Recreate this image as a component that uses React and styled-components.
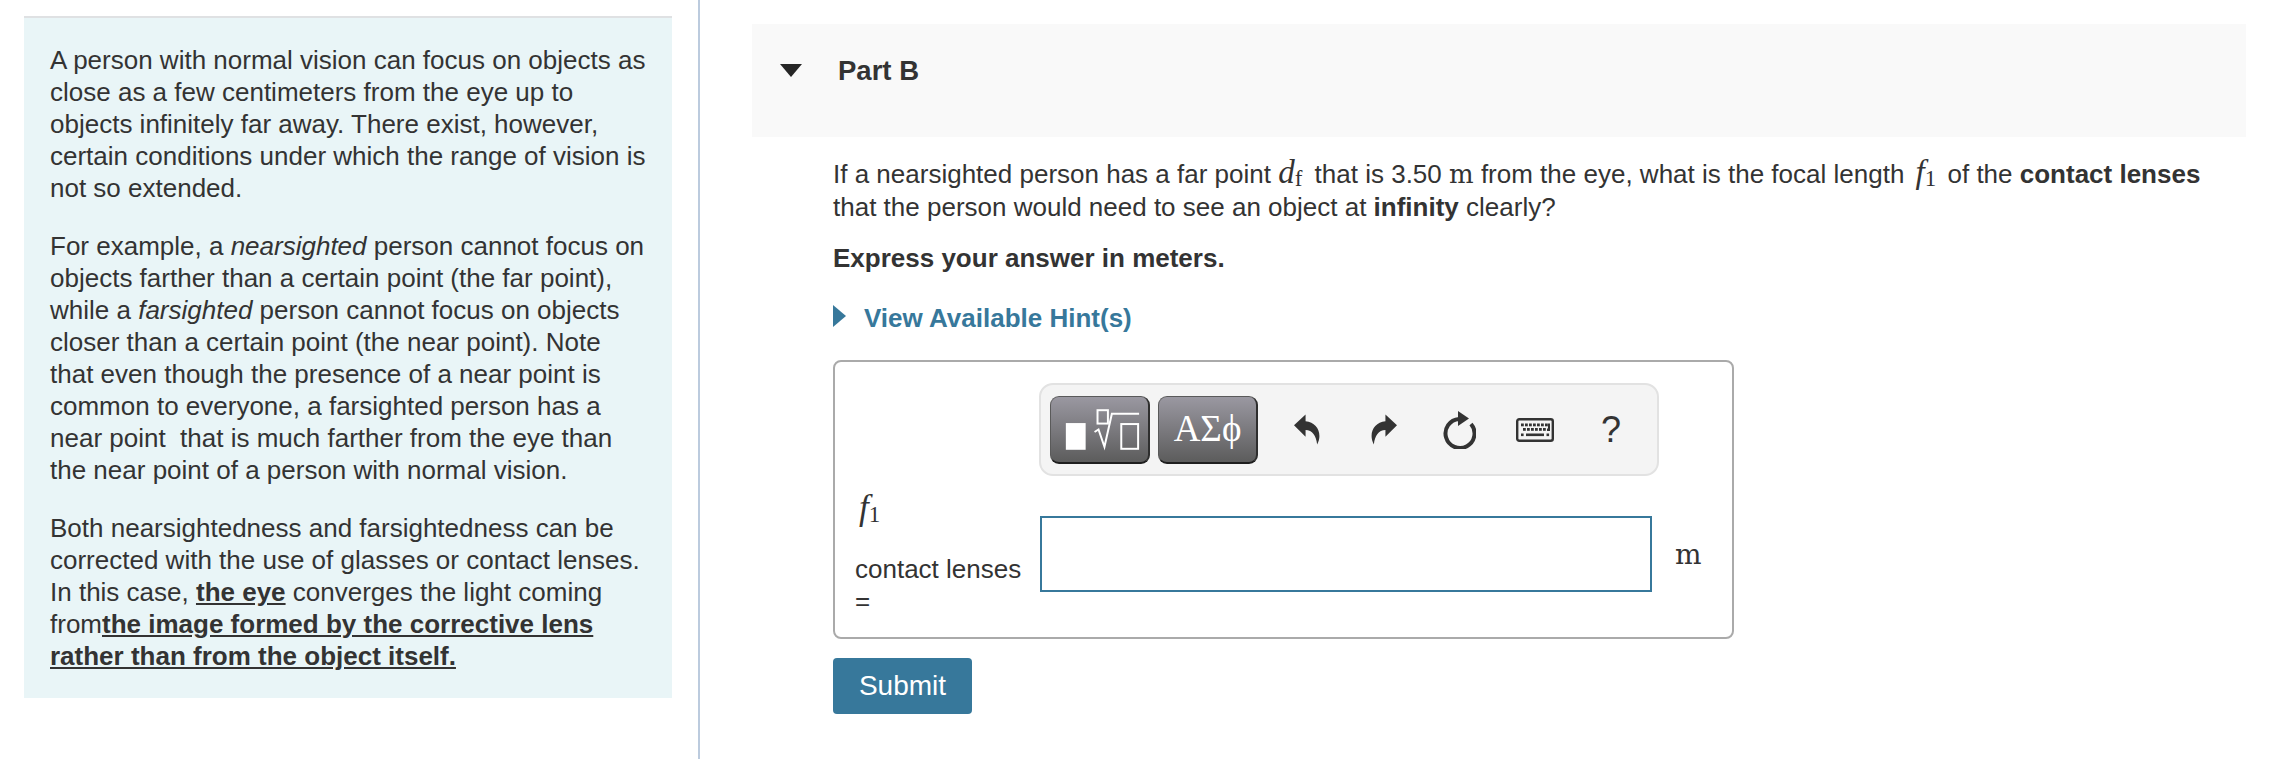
import React from 'react';
import styled, { createGlobalStyle } from 'styled-components';

const GlobalStyle = createGlobalStyle`
    html, body {
        margin: 0;
        padding: 0;
        background: #fff;
        overflow: hidden;
    }
    body {
        font-family: "Liberation Sans", Arial, sans-serif;
        font-size: 26px;
        line-height: 32px;
        color: #333;
    }
`;

const Page = styled.div`
    display: flex;
    width: 2284px;
    height: 759px;
`;

const LeftColumn = styled.aside`
    flex: none;
    width: 648px;
    height: 100%;
    box-sizing: content-box;
    padding: 16px 26px 0 24px;
    border-right: 2px solid #bccbde;
`;

const IntroPanel = styled.div`
    background: #e9f5f7;
    border-top: 2px solid #dfe1e3;
    padding: 26px 24px 26px 26px;
`;

const Paragraph = styled.p`
    margin: 0 0 26px;
    &:last-child {
        margin-bottom: 0;
    }
`;

const Strong = styled.strong`
    text-decoration: ${p => (p.$underline ? 'underline' : 'none')};
`;

const RightColumn = styled.main`
    flex: 1;
    padding: 24px 38px 0 52px;
    min-width: 0;
`;

const PartHeader = styled.header`
    display: flex;
    align-items: flex-start;
    height: 113px;
    box-sizing: border-box;
    padding: 31px 0 0 28px;
    background: #f9f9f9;
    font-weight: bold;
    font-size: 27.5px;
`;

const Caret = styled.span`
    width: 0;
    height: 0;
    margin: 9px 36px 0 0;
    border-left: 11px solid transparent;
    border-right: 11px solid transparent;
    border-top: 13px solid #262626;
`;

const PartBody = styled.section`
    padding: 21px 0 0 81px;
`;

const Question = styled.div`
    line-height: 33px;
`;

const MathVar = styled.span`
    font-family: "Liberation Serif", serif;
    font-style: italic;
    font-size: 33px;
    line-height: 0;
    margin: ${p => (p.$tight ? '0 5px 0 0' : '0 4px')};
`;

const Sub = styled.sub`
    font-family: "Liberation Serif", serif;
    font-style: normal;
    font-size: 23px;
    line-height: 0;
    vertical-align: -3px;
`;

const Unit = styled.span`
    font-family: "DejaVu Serif", serif;
    font-size: 26px;
    line-height: 0;
`;

const Instruction = styled.div`
    margin-top: 18px;
    font-weight: bold;
`;

const HintToggle = styled.div`
    display: flex;
    align-items: center;
    gap: 18px;
    margin-top: 28px;
    font-weight: bold;
    color: #37789b;
`;

const HintCaret = styled.span`
    width: 0;
    height: 0;
    margin-top: -4px;
    border-top: 11px solid transparent;
    border-bottom: 11px solid transparent;
    border-left: 13px solid #37789b;
`;

const AnswerBox = styled.div`
    width: 901px;
    height: 279px;
    box-sizing: border-box;
    margin-top: 26px;
    padding: 21px 0 0 20px;
    border: 2px solid #aaa;
    border-radius: 8px;
`;

const Toolbar = styled.div`
    display: flex;
    align-items: center;
    width: 620px;
    height: 93px;
    box-sizing: border-box;
    margin-left: 184px;
    padding-left: 9px;
    background: #f4f4f4;
    border: 2px solid #e2e2e2;
    border-radius: 14px;
`;

const PaletteButton = styled.div`
    display: flex;
    align-items: center;
    justify-content: center;
    width: 100px;
    height: 68px;
    box-sizing: border-box;
    margin-right: 8px;
    background: linear-gradient(#9a98a1, #5c5c5c);
    border: 1px solid #5a5a5a;
    border-bottom: 2px solid #1e1e1e;
    border-right: 2px solid #2e2e2e;
    border-radius: 9px;
    color: #fff;
    font-family: "Liberation Serif", serif;
    font-size: 37px;
`;

const ToolGroup = styled.div`
    display: flex;
    align-items: center;
    margin-left: 3px;
`;

const ToolIcon = styled.div`
    display: flex;
    align-items: center;
    justify-content: center;
    width: 76px;
    color: #333;
    font-size: 36px;
`;

const AnswerRow = styled.div`
    display: flex;
    margin-top: 15px;
`;

const AnswerLabel = styled.div`
    width: 185px;
    flex: none;
`;

const LabelVar = styled.div`
    font-family: "Liberation Serif", serif;
    font-style: italic;
    font-size: 35px;
    height: 62px;
    line-height: 34px;
    padding-left: 4px;
`;

const AnswerInput = styled.div`
    width: 612px;
    height: 76px;
    box-sizing: border-box;
    margin-top: 25px;
    border: 2px solid #37789b;
    background: #fff;
`;

const AnswerUnit = styled(Unit)`
    margin: 44px 0 0 23px;
    line-height: 40px;
    font-size: 28px;
`;

const Submit = styled.button`
    display: block;
    width: 139px;
    height: 56px;
    margin-top: 19px;
    padding: 0;
    border: 0;
    border-radius: 4px;
    background: #37789b;
    color: #fff;
    font-family: inherit;
    font-size: 28px;
`;

function TemplatesIcon() {
    return (
        <svg width="98" height="65" viewBox="1 1 98 65" fill="none" stroke="#fff">
            <rect x="16" y="27" width="20" height="27" fill="#fff" stroke="none" />
            <rect x="48" y="14" width="10.5" height="13.5" strokeWidth="2" />
            <rect x="72" y="28" width="17" height="25" strokeWidth="2" />
            <path d="M45 36 L49 33.5 L55 51 L62.5 17.5 H90" strokeWidth="2" />
        </svg>
    );
}

function UndoIcon({ flip }) {
    return (
        <svg width="27" height="32" viewBox="0 0 28 32" fill="#333"
            transform={flip ? 'scale(-1 1)' : undefined}>
            <path d="M0 11 L12 0 V7 C24 8 30 20 24 31 C23 22 19 16 12 16 V23 Z" />
        </svg>
    );
}

function ResetIcon() {
    return (
        <svg width="34" height="38" viewBox="0 0 34 38" fill="none" stroke="#333">
            <path d="M29 13 A14.5 14.5 0 1 1 17 8" strokeWidth="4" />
            <path d="M16 0 L27 7.5 L16 15 Z" fill="#333" stroke="none" />
        </svg>
    );
}

function KeyboardIcon() {
    const keys = [];
    for (let i = 0; i < 7; i++) keys.push(<rect key={`a${i}`} x={5 + i * 4} y="5.5" width="2.8" height="2.8" />);
    for (let i = 0; i < 6; i++) keys.push(<rect key={`b${i}`} x={7 + i * 4} y="10" width="2.8" height="2.8" />);
    return (
        <svg width="38" height="24" viewBox="0 0 38 24" fill="#333">
            <rect x="1.2" y="1.2" width="35.6" height="21.6" rx="2" fill="none" stroke="#333" strokeWidth="2.4" />
            {keys}
            <path d="M32 5.5 H34 V13 H31 V10.5 H32 Z" />
            <rect x="5" y="15.5" width="2.6" height="2.6" />
            <rect x="10" y="15.5" width="18" height="2.6" />
            <rect x="30.5" y="15.5" width="2.6" height="2.6" />
        </svg>
    );
}

export default function App() {
    return (
        <Page>
            <GlobalStyle />
            <LeftColumn>
                <IntroPanel>
                    <Paragraph>
                        A person with normal vision can focus on objects as close as a few centimeters from the eye up to objects infinitely far away. There exist, however, certain conditions under which the range of vision is not so extended.
                    </Paragraph>
                    <Paragraph>
                        For example, a <em>nearsighted</em> person cannot focus on objects farther than a certain point (the far point), while a <em>farsighted</em> person cannot focus on objects closer than a certain point (the near point). Note that even though the presence of a near point is common to everyone, a farsighted person has a near point&nbsp; that is much farther from the eye than the near point of a person with normal vision.
                    </Paragraph>
                    <Paragraph>
                        Both nearsightedness and farsightedness can be corrected with the use of glasses or contact lenses. In this case, <Strong $underline>the eye</Strong> converges the light coming from<Strong $underline>the image formed by the corrective lens rather than from the object itself.</Strong>
                    </Paragraph>
                </IntroPanel>
            </LeftColumn>
            <RightColumn>
                <PartHeader>
                    <Caret />
                    Part B
                </PartHeader>
                <PartBody>
                    <Question>
                        If a nearsighted person has a far point <MathVar $tight>d<Sub>f</Sub></MathVar> that is 3.50 <Unit>m</Unit> from the eye, what is the focal length <MathVar>f<Sub>1</Sub></MathVar> of the <strong>contact lenses</strong><br />
                        that the person would need to see an object at <strong>infinity</strong> clearly?
                    </Question>
                    <Instruction>Express your answer in meters.</Instruction>
                    <HintToggle>
                        <HintCaret />
                        View Available Hint(s)
                    </HintToggle>
                    <AnswerBox>
                        <Toolbar>
                            <PaletteButton><TemplatesIcon /></PaletteButton>
                            <PaletteButton>ΑΣϕ</PaletteButton>
                            <ToolGroup>
                                <ToolIcon><UndoIcon /></ToolIcon>
                                <ToolIcon><UndoIcon flip /></ToolIcon>
                                <ToolIcon><ResetIcon /></ToolIcon>
                                <ToolIcon><KeyboardIcon /></ToolIcon>
                                <ToolIcon>?</ToolIcon>
                            </ToolGroup>
                        </Toolbar>
                        <AnswerRow>
                            <AnswerLabel>
                                <LabelVar>f<Sub>1</Sub></LabelVar>
                                contact lenses =
                            </AnswerLabel>
                            <AnswerInput />
                            <AnswerUnit>m</AnswerUnit>
                        </AnswerRow>
                    </AnswerBox>
                    <Submit>Submit</Submit>
                </PartBody>
            </RightColumn>
        </Page>
    );
}
